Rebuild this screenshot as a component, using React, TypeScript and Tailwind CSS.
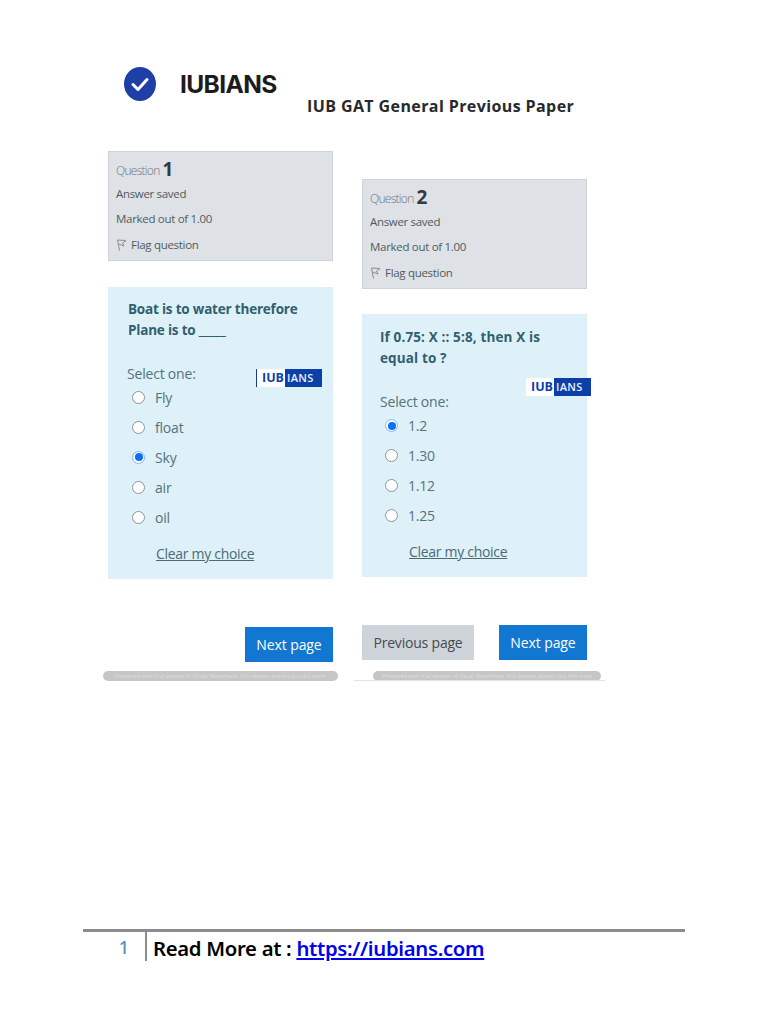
const sans = "font-['Open_Sans','Noto_Sans',sans-serif]";

function Flag() {
  return (
    <svg width="11" height="12" viewBox="0 0 11 12" fill="none" stroke="#8a8f94" strokeWidth="1" className="shrink-0">
      <path d="M1.5 1 L10 1.5 L6.5 4 L8 7 L2.5 5" />
      <path d="M1.5 1 L3.5 11.5" />
    </svg>
  );
}

function InfoBox({ n, className }: { n: string; className?: string }) {
  return (
    <div className={`h-[110px] w-[225px] border border-[#cfd2d6] bg-[#dee2e6] pl-[7px] pt-[8px] text-[#4f5a60] ${className ?? ""}`}>
      <div className="flex h-[21px] items-center gap-[3px]">
        <span className="text-[12px] font-light tracking-[-0.72px] text-[#6c757d]">Question</span>
        <span className="-translate-y-[1px] text-[19px] leading-none font-bold text-[#343a40]">{n}</span>
      </div>
      <div className="mt-[4px] h-[18px] text-[11.5px] leading-[18px] tracking-[-0.32px]">Answer saved</div>
      <div className="mt-[7px] h-[18px] text-[11.5px] leading-[18px] tracking-[-0.3px]">Marked out of 1.00</div>
      <div className="mt-[8px] flex h-[18px] items-center gap-[4px] text-[11.5px] tracking-[-0.3px]">
        <Flag />
        <span>Flag question</span>
      </div>
    </div>
  );
}

function Radio({ checked }: { checked?: boolean }) {
  if (checked) {
    return (
      <span className="flex h-[13px] w-[13px] items-center justify-center rounded-full border border-[#80b5ff] bg-white">
        <span className="h-[8px] w-[8px] rounded-full bg-[#0b6ff0]" />
      </span>
    );
  }
  return <span className="h-[13px] w-[13px] rounded-full border border-[#8f9597] bg-white" />;
}

function Options({ items, checked }: { items: string[]; checked: string }) {
  return (
    <div className="-mt-[2px] flex flex-col">
      {items.map((o) => (
        <div key={o} className="flex h-[29.8px] items-center text-[14px] tracking-[-0.2px] text-[#55727c]">
          <span className="ml-[5px] flex w-[23px]"><Radio checked={o === checked} /></span>
          <span>{o}</span>
        </div>
      ))}
    </div>
  );
}

function Badge({ className }: { className?: string }) {
  return (
    <div className={`absolute flex h-[18px] items-stretch text-[12.5px] leading-[18px] font-bold ${className ?? ""}`}>
      <span className="bg-white pl-[5px] pr-[1px] text-[#0d3fa8]">IUB</span>
      <span className="flex-1 bg-[#0d3fa8] pl-[2px] text-[11px] font-semibold tracking-[0.3px] text-[#e8f0ff]">IANS</span>
    </div>
  );
}

function Watermark({ className }: { className?: string }) {
  return (
    <div className={`h-[10px] overflow-hidden rounded-[5px] bg-[#c6c6c6] px-[3px] text-center text-[5.5px] leading-[10px] whitespace-nowrap text-[#dedede] ${className ?? ""}`}>
      Protected with trial version of Visual Watermark. Full version doesn't put this mark
    </div>
  );
}

export default function App() {
  return (
    <div className={`relative flex h-[1024px] w-[768px] flex-col overflow-hidden bg-white ${sans}`}>
      <header className="relative h-[151px] shrink-0">
        <div className="flex items-center pl-[124px] pt-[67px]">
          <svg width="32" height="34" viewBox="0 0 32 34">
            <ellipse cx="16" cy="17" rx="16" ry="17" fill="#1f3fa8" />
            <path d="M9 17.5 L14 22.5 L23 12.5" fill="none" stroke="#fff" strokeWidth="3" strokeLinecap="round" strokeLinejoin="round" />
          </svg>
          <span className="ml-[24px] font-['Inter',sans-serif] text-[24.5px] leading-[30px] font-bold tracking-[-0.6px] text-[#1c1c20]">IUBIANS</span>
        </div>
        <div className="absolute top-[95px] left-[307px] text-[16px] leading-[22px] font-bold tracking-[0.4px] text-[#27292c]">IUB GAT General Previous Paper</div>
      </header>

      <main className="flex pl-[108px]">
        <section className="flex w-[225px] flex-col">
          <InfoBox n="1" />
          <div className="relative mt-[26px] h-[292px] w-[225px] bg-[#def1f8] pl-[19px] pt-[12px]">
            <div className="ml-[1px] text-[13.5px] leading-[21px] font-bold tracking-[-0.2px] text-[#2f5f70]">
              Boat is to water therefore<br />Plane is to _____
            </div>
            <div className="mt-[22px] text-[14px] leading-[22px] tracking-[-0.2px] text-[#55727c]">Select one:</div>
            <Options items={["Fly", "float", "Sky", "air", "oil"]} checked="Sky" />
            <div className="mt-[12px] ml-[29px] text-[14px] leading-[20px] tracking-[-0.3px] text-[#4c6a75] underline">Clear my choice</div>
            <Badge className="top-[82px] left-[148px] w-[66px] border-l border-[#0d3fa8]" />
          </div>
          <div className="mt-[48px] flex justify-end">
            <div className="flex h-[35px] w-[88px] items-center justify-center bg-[#1177d1] text-[14px] tracking-[-0.1px] text-white">Next page</div>
          </div>
          <Watermark className="mt-[9px] -ml-[5px] w-[235px]" />
        </section>

        <section className="ml-[29px] flex w-[225px] flex-col pt-[28px]">
          <InfoBox n="2" />
          <div className="relative mt-[25px] h-[263px] w-[225px] bg-[#def1f8] pl-[18px] pt-[13px]">
            <div className="text-[13.5px] leading-[21px] font-bold tracking-[0.13px] text-[#2f5f70]">
              If 0.75: X :: 5:8, then X is<br />equal to ?
            </div>
            <div className="mt-[22px] text-[14px] leading-[22px] tracking-[-0.2px] text-[#55727c]">Select one:</div>
            <Options items={["1.2", "1.30", "1.12", "1.25"]} checked="1.2" />
            <div className="mt-[12px] ml-[29px] text-[14px] leading-[20px] tracking-[-0.3px] text-[#4c6a75] underline">Clear my choice</div>
            <Badge className="top-[64px] left-[164px] w-[65px]" />
          </div>
          <div className="mt-[48px] flex justify-between">
            <div className="flex h-[35px] w-[112px] items-center justify-center bg-[#ced4da] text-[14px] tracking-[-0.2px] text-[#454b50]">Previous page</div>
            <div className="flex h-[35px] w-[88px] items-center justify-center bg-[#1177d1] text-[14px] tracking-[-0.1px] text-white">Next page</div>
          </div>
          <div className="relative">
            <Watermark className="mt-[11px] ml-[11px] w-[228px]" />
            <div className="absolute top-[20px] -left-[8px] h-px w-[251px] bg-[#e2e2e2]" />
          </div>
        </section>
      </main>

      <footer className="mt-auto mb-[63px] ml-[83px] w-[602px] border-t-[3px] border-[#8c8c8c]">
        <div className="flex h-[29px]">
          <span className="flex w-[62px] justify-end pr-[16px] pt-[3px] font-['Noto_Sans',sans-serif] text-[18px] leading-[24px] font-medium text-[#5b8cb8]">1</span>
          <div className="flex items-center border-l-[2px] border-[#8c8c8c] pl-[6px] pt-[4px] font-['Noto_Sans',sans-serif] text-[20.3px] leading-[25px] font-semibold tracking-[-0.3px] whitespace-nowrap text-black">
            Read More at :&nbsp;<a className="text-[#0000f0] underline">https://iubians.com</a>
          </div>
        </div>
      </footer>
    </div>
  );
}
